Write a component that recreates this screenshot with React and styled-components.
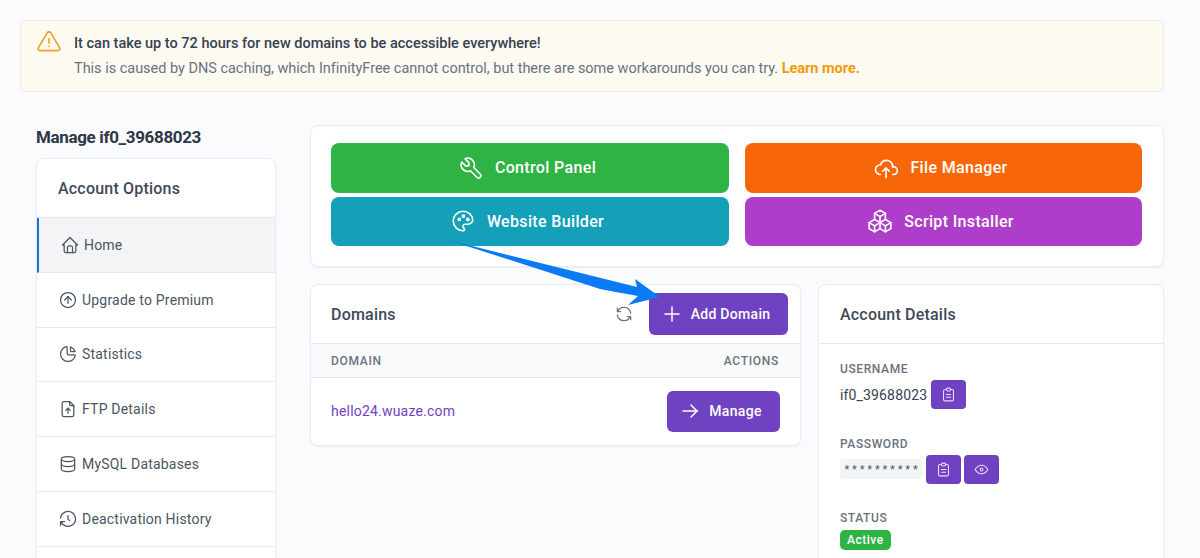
import React from 'react';
import styled, { createGlobalStyle } from 'styled-components';
import {
  TbAlertTriangle, TbArrowRight, TbChartPie, TbCircleArrowUp, TbClipboardText, TbCloudUpload,
  TbDatabase, TbEye, TbFileUpload, TbHistory, TbHome, TbPackages, TbPalette, TbPlus, TbRefresh, TbTool,
} from 'react-icons/tb';

const GlobalStyle = createGlobalStyle`
  html, body { margin: 0; height: 100%; overflow: hidden; background: #f9fbfd; }
  body { font-family: Roboto, "Liberation Sans", sans-serif; color: #374151; }
  * { box-sizing: border-box; }
`;

const Page = styled.div`
  position: relative;
  height: 558px;
  overflow: hidden;
  padding: 20px 36px 0 20px;
`;

const Alert = styled.div`
  display: flex;
  gap: 12px;
  height: 72px;
  padding: 11px 15px;
  background: #fdfaf2;
  border: 1px solid #fbead6;
  border-radius: 6px;
  svg { color: #f0a020; flex: none; margin-top: -3px; }
`;

const AlertTitle = styled.div`
  font-size: 14.5px;
  line-height: 24px;
  font-weight: 500;
  color: #374151;
`;

const AlertText = styled.div`
  font-size: 14.5px;
  line-height: 25px;
  letter-spacing: -0.02px;
  color: #6b7280;
  a { color: #f09c0e; font-weight: 700; text-decoration: none; }
`;

const Columns = styled.div`
  display: flex;
  gap: 34px;
  margin-top: 33px;
  padding-left: 16px;
`;

const Side = styled.aside`
  width: 240px;
  flex: none;
`;

const SideTitle = styled.h1`
  margin: 0 0 8px;
  font-size: 17px;
  line-height: 25px;
  font-weight: 700;
  letter-spacing: -0.35px;
  color: #2f3747;
`;

const Card = styled.section`
  background: #fff;
  border: 1px solid #e9ecf0;
  border-radius: 8px;
  box-shadow: 0 1px 2px rgba(17, 24, 39, 0.06);
`;

const CardHead = styled.header`
  display: flex;
  align-items: center;
  height: 59px;
  padding: 0 20px 0 21px;
  border-bottom: 1px solid #e5e7eb;
`;

const DomainHead = styled(CardHead)`
  padding-left: 20px;
`;

const CardTitle = styled.h2`
  margin: 0;
  font-size: 16px;
  font-weight: 500;
  letter-spacing: 0.2px;
  color: #414958;
`;

const NavItem = styled.a`
  display: flex;
  align-items: center;
  gap: 4px;
  height: 54.75px;
  padding: 0 24px 0 21px;
  font-size: 14px;
  letter-spacing: 0.2px;
  color: #4b5563;
  background: ${({ $active }) => ($active ? '#f3f4f6' : '#fff')};
  border-bottom: 1px solid #e9ebee;
  border-left: ${({ $active }) => ($active ? '2px solid #1673d6' : '0')};
  svg { flex: none; }
`;

const Main = styled.div`
  flex: 1;
  min-width: 0;
`;

const QuickCard = styled(Card)`
  display: grid;
  grid-template-columns: 398px 397px;
  align-content: start;
  column-gap: 16px;
  row-gap: 4px;
  height: 142px;
  padding: 17px 20px;
`;

const QuickButton = styled.a`
  display: flex;
  align-items: center;
  justify-content: center;
  gap: 11px;
  height: 49.5px;
  padding-right: 6px;
  border-radius: 8px;
  background: ${({ $color }) => $color};
  color: #fff;
  font-size: 16px;
  font-weight: 500;
  letter-spacing: 0.35px;
`;

const Lower = styled.div`
  display: flex;
  align-items: flex-start;
  gap: 17px;
  margin-top: 17px;
`;

const DomainCard = styled(Card)`
  width: 491px;
  flex: none;
`;

const Refresh = styled.span`
  display: flex;
  margin-left: auto;
  margin-right: 15px;
  color: #6b7280;
`;

const PurpleButton = styled.a`
  display: flex;
  align-items: center;
  justify-content: center;
  gap: 7px;
  width: ${({ $width }) => $width}px;
  height: ${({ $height }) => $height}px;
  padding-right: 7px;
  border-radius: 6px;
  background: #6f42c1;
  color: #fff;
  font-size: 14px;
  font-weight: 500;
  letter-spacing: 0.3px;
`;

const AddButton = styled(PurpleButton)`
  margin-right: -8px;
`;

const TableHead = styled.div`
  display: flex;
  align-items: center;
  justify-content: space-between;
  height: 34px;
  padding: 0 21px 0 20px;
  background: #f9fafb;
  border-bottom: 1px solid #e5e7eb;
  font-size: 12px;
  font-weight: 500;
  letter-spacing: 0.7px;
  color: #6b7280;
`;

const TableRow = styled.div`
  display: flex;
  align-items: center;
  justify-content: space-between;
  height: 67px;
  padding: 0 20px 1px;
`;

const DomainLink = styled.a`
  font-size: 14px;
  letter-spacing: 0.2px;
  color: #6f42c1;
`;

const AccountCard = styled(Card)`
  flex: 1;
  height: 400px;
`;

const Details = styled.div`
  padding: 17px 21px;
`;

const Field = styled.div`
  margin-bottom: 26.5px;
`;

const FieldLabel = styled.div`
  font-size: 12px;
  line-height: 16px;
  font-weight: 500;
  letter-spacing: 0.6px;
  color: #6b7280;
  margin-bottom: 3px;
`;

const FieldValue = styled.div`
  display: flex;
  align-items: center;
  gap: 3.5px;
  font-size: 14px;
  letter-spacing: 0.15px;
  color: #374151;
`;

const Masked = styled.code`
  display: block;
  padding: 3px 3px 0;
  height: 20px;
  background: #f3f4f6;
  border-radius: 4px;
  font-family: "Liberation Mono", monospace;
  font-size: 13px;
  line-height: 17px;
  letter-spacing: -0.2px;
  color: #4b5563;
`;

const IconButton = styled.a`
  display: flex;
  align-items: center;
  justify-content: center;
  width: 35px;
  height: 29px;
  border-radius: 4px;
  background: #6f42c1;
  color: #e9ddfb;
`;

const Badge = styled.span`
  display: inline-block;
  padding: 0 7px;
  height: 20px;
  border-radius: 5px;
  background: #2fb344;
  color: #fff;
  font-size: 12px;
  line-height: 20px;
  font-weight: 500;
  letter-spacing: 0.5px;
`;

const ArrowOverlay = styled.svg`
  position: absolute;
  left: 0;
  top: 0;
  pointer-events: none;
`;

const navItems = [
  { label: 'Home', Icon: TbHome, active: true },
  { label: 'Upgrade to Premium', Icon: TbCircleArrowUp },
  { label: 'Statistics', Icon: TbChartPie },
  { label: 'FTP Details', Icon: TbFileUpload },
  { label: 'MySQL Databases', Icon: TbDatabase },
  { label: 'Deactivation History', Icon: TbHistory },
];

const quickLinks = [
  { label: 'Control Panel', Icon: TbTool, color: '#2fb344' },
  { label: 'File Manager', Icon: TbCloudUpload, color: '#f76707' },
  { label: 'Website Builder', Icon: TbPalette, color: '#13a0b8' },
  { label: 'Script Installer', Icon: TbPackages, color: '#ae3ec9' },
];

export default function App() {
  return (
    <Page>
      <GlobalStyle />
      <Alert>
        <TbAlertTriangle size={26} strokeWidth={1.5} />
        <div>
          <AlertTitle>It can take up to 72 hours for new domains to be accessible everywhere!</AlertTitle>
          <AlertText>
            This is caused by DNS caching, which InfinityFree cannot control, but there are some workarounds you can try. <a href="#more">Learn more.</a>
          </AlertText>
        </div>
      </Alert>
      <Columns>
        <Side>
          <SideTitle>Manage if0_39688023</SideTitle>
          <Card>
            <CardHead><CardTitle>Account Options</CardTitle></CardHead>
            {navItems.map(({ label, Icon, active }) => (
              <NavItem key={label} $active={active}>
                <Icon size={20} strokeWidth={1.5} />
                {label}
              </NavItem>
            ))}
            <NavItem />
          </Card>
        </Side>
        <Main>
          <QuickCard>
            {quickLinks.map(({ label, Icon, color }) => (
              <QuickButton key={label} $color={color}>
                <Icon size={26} strokeWidth={1.5} />
                {label}
              </QuickButton>
            ))}
          </QuickCard>
          <Lower>
            <DomainCard>
              <DomainHead>
                <CardTitle>Domains</CardTitle>
                <Refresh><TbRefresh size={20} strokeWidth={1.5} /></Refresh>
                <AddButton $width={139} $height={42}><TbPlus size={24} strokeWidth={1.5} />Add Domain</AddButton>
              </DomainHead>
              <TableHead><span>DOMAIN</span><span>ACTIONS</span></TableHead>
              <TableRow>
                <DomainLink>hello24.wuaze.com</DomainLink>
                <PurpleButton $width={113} $height={41}><TbArrowRight size={24} strokeWidth={1.5} />Manage</PurpleButton>
              </TableRow>
            </DomainCard>
            <AccountCard>
              <CardHead><CardTitle>Account Details</CardTitle></CardHead>
              <Details>
                <Field>
                  <FieldLabel>USERNAME</FieldLabel>
                  <FieldValue>
                    if0_39688023
                    <IconButton><TbClipboardText size={17} strokeWidth={1.5} /></IconButton>
                  </FieldValue>
                </Field>
                <Field>
                  <FieldLabel>PASSWORD</FieldLabel>
                  <FieldValue>
                    <Masked>**********</Masked>
                    <IconButton><TbClipboardText size={17} strokeWidth={1.5} /></IconButton>
                    <IconButton><TbEye size={17} strokeWidth={1.5} /></IconButton>
                  </FieldValue>
                </Field>
                <Field>
                  <FieldLabel>STATUS</FieldLabel>
                  <Badge>Active</Badge>
                </Field>
              </Details>
            </AccountCard>
          </Lower>
        </Main>
      </Columns>
      <ArrowOverlay width="1200" height="558" viewBox="0 0 1200 558">
        <path d="M448 240 L637 287 L635 279 L660 297 L628 305 L638 296 Q615 292 600 289 Z" fill="#0a7af5" />
      </ArrowOverlay>
    </Page>
  );
}
